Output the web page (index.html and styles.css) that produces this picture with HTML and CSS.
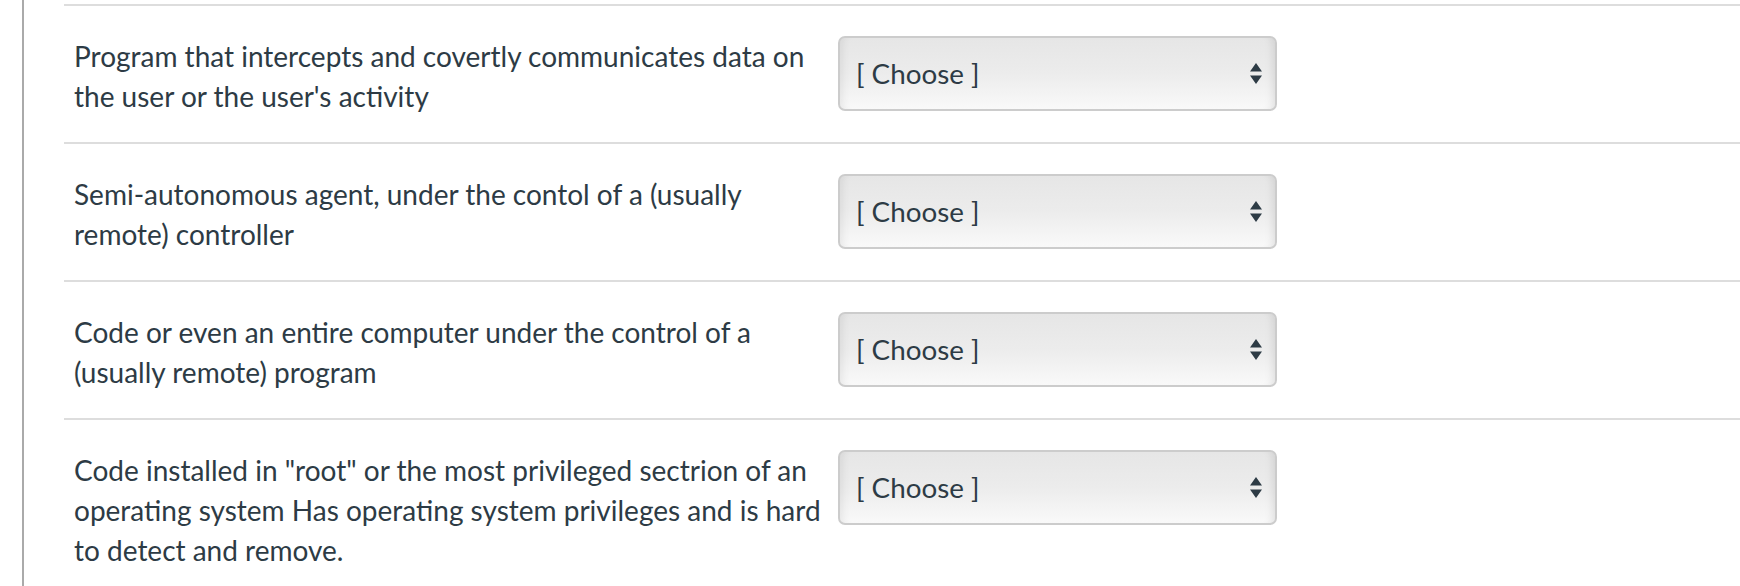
FILE: index.html
```html
<!DOCTYPE html>
<html>
<head>
<meta charset="utf-8">
<link rel="stylesheet" href="styles.css">
</head>
<body>
<div class="frame">
  <div class="list">
    <div class="row">
      <div class="label">Program that intercepts and covertly communicates data on the user or the user's activity</div>
      <div class="select"><span class="value">[ Choose ]</span><svg class="arrows" width="12" height="22" viewBox="0 0 12 22"><path d="M6 0 L12 8.5 L0 8.5 Z M0 12.5 L12 12.5 L6 21 Z" fill="#2d3b45"/></svg></div>
    </div>
    <div class="row">
      <div class="label">Semi-autonomous agent, under the contol of a (usually remote) controller</div>
      <div class="select"><span class="value">[ Choose ]</span><svg class="arrows" width="12" height="22" viewBox="0 0 12 22"><path d="M6 0 L12 8.5 L0 8.5 Z M0 12.5 L12 12.5 L6 21 Z" fill="#2d3b45"/></svg></div>
    </div>
    <div class="row">
      <div class="label">Code or even an entire computer under the control of a (usually remote) program</div>
      <div class="select"><span class="value">[ Choose ]</span><svg class="arrows" width="12" height="22" viewBox="0 0 12 22"><path d="M6 0 L12 8.5 L0 8.5 Z M0 12.5 L12 12.5 L6 21 Z" fill="#2d3b45"/></svg></div>
    </div>
    <div class="row">
      <div class="label">Code installed in "root" or the most privileged sectrion of an operating system Has operating system privileges and is hard to detect and remove.</div>
      <div class="select"><span class="value">[ Choose ]</span><svg class="arrows" width="12" height="22" viewBox="0 0 12 22"><path d="M6 0 L12 8.5 L0 8.5 Z M0 12.5 L12 12.5 L6 21 Z" fill="#2d3b45"/></svg></div>
    </div>
  </div>
</div>
</body>
</html>
```
FILE: styles.css
```css
html, body {
  margin: 0;
  padding: 0;
  background: #ffffff;
  height: 100%;
  overflow: hidden;
}
body {
  font-family: Lato, "Noto Sans", sans-serif;
  color: #2d3b45;
}
.frame {
  margin-left: 22px;
  border-left: 2px solid #aaaaaa;
  height: 100%;
  padding-top: 4px;
  box-sizing: border-box;
}
.list {
  margin-left: 40px;
}
.row {
  border-top: 2px solid #dddddd;
  display: flex;
  align-items: flex-start;
  padding: 30px 0 26px 10px;
}
.label {
  width: 752px;
  font-size: 28px;
  line-height: 40px;
  flex-shrink: 0;
}
.select {
  margin-left: 12px;
  width: 439px;
  height: 75px;
  box-sizing: border-box;
  border: 2px solid #cccccc;
  border-radius: 7px;
  background: linear-gradient(to bottom, #e6e6e6 0%, #ececec 50%, #f9f9f9 100%);
  box-shadow: inset 10px 0 8px -8px rgba(0,0,0,0.08), inset -10px 0 8px -8px rgba(0,0,0,0.10);
  display: flex;
  align-items: center;
  justify-content: space-between;
  padding: 0 13px 0 16px;
  flex-shrink: 0;
}
.value {
  font-size: 27.8px;
  color: #2d3b45;
  margin-top: -1px;
}
.arrows {
  display: block;
}
```
